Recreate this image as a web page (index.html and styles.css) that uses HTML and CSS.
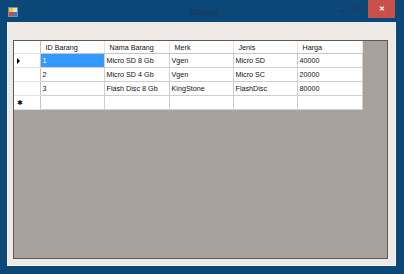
FILE: index.html
```html
<!DOCTYPE html>
<html>
<head>
<meta charset="utf-8">
<link rel="stylesheet" href="styles.css">
</head>
<body>
<div class="window">
  <div class="titlebar">
    <svg class="appicon" width="10" height="10" viewBox="0 0 10 10">
      <rect x="0" y="0" width="10" height="10" fill="#6d8fb8"/>
      <rect x="1" y="1" width="4" height="4" fill="#f2c230"/>
      <rect x="5" y="1" width="4" height="4" fill="#e9e4b0"/>
      <rect x="1" y="5" width="4" height="4" fill="#d2473a"/>
      <rect x="5" y="5" width="4" height="4" fill="#3d78c9"/>
    </svg>
    <div class="title">Barang</div>
    <div class="controls">
      <div class="ctl min"><span class="dash"></span></div>
      <div class="ctl max"><span class="box"></span></div>
      <div class="ctl close">&#x2715;</div>
    </div>
  </div>
  <div class="client">
    <div class="grid">
      <table class="dg">
        <colgroup>
          <col class="c-rh"><col class="c1"><col class="c2"><col class="c3"><col class="c4"><col class="c5">
        </colgroup>
        <thead>
          <tr><th class="rh"></th><th>ID Barang</th><th>Nama Barang</th><th>Merk</th><th>Jenis</th><th>Harga</th></tr>
        </thead>
        <tbody>
          <tr><td class="rh"><span class="arrow"></span></td><td class="sel">1</td><td>Micro SD 8 Gb</td><td>Vgen</td><td>Micro SD</td><td>40000</td></tr>
          <tr><td class="rh"></td><td>2</td><td>Micro SD 4 Gb</td><td>Vgen</td><td>Micro SC</td><td>20000</td></tr>
          <tr><td class="rh"></td><td>3</td><td>Flash Disc 8 Gb</td><td>KingStone</td><td>FlashDisc</td><td>80000</td></tr>
          <tr><td class="rh star">&#x2731;</td><td></td><td></td><td></td><td></td><td></td></tr>
        </tbody>
      </table>
    </div>
  </div>
</div>
</body>
</html>
```
FILE: styles.css
```css
html, body {
  margin: 0;
  padding: 0;
}
body {
  width: 404px;
  height: 274px;
  overflow: hidden;
  background: #0b4777;
  font-family: "Liberation Sans", Arial, sans-serif;
}
.window {
  display: flex;
  flex-direction: column;
  width: 404px;
  height: 274px;
}
.titlebar {
  position: relative;
  height: 22px;
  display: flex;
  align-items: center;
}
.appicon {
  position: absolute;
  left: 8px;
  top: 7px;
}
.title {
  flex: 1;
  text-align: center;
  font-size: 9px;
  color: #1d3656;
  padding-top: 2px;
  padding-left: 4px;
}
.controls {
  position: absolute;
  right: 9px;
  top: 0;
  display: flex;
  height: 18px;
}
.ctl {
  height: 18px;
  display: flex;
  align-items: center;
  justify-content: center;
}
.min { width: 18px; }
.max { width: 14px; margin-right: 4px; }
.dash {
  width: 5px;
  height: 2px;
  background: #1f3a5c;
  margin-top: 4px;
}
.box {
  width: 4px;
  height: 4px;
  border: 1px solid #1f3a5c;
  margin-top: -2px;
}
.close {
  width: 27px;
  background: #c9504b;
  color: #ffffff;
  font-size: 7px;
  font-weight: bold;
}
.client {
  margin: 0 8px 8px 7px;
  flex: 1;
  background: #ece9e6;
  border-left: 1px solid #f6f5f3;
  border-right: 1px solid #f6f5f3;
  border-bottom: 1px solid #f6f5f3;
  padding: 18px 7px 6px 5px;
  display: flex;
}
.grid {
  flex: 1;
  background: #a8a09b;
  border: 1px solid #5c5a58;
}
.dg {
  border-collapse: collapse;
  table-layout: fixed;
  width: 348px;
  font-size: 7.2px;
  color: #111;
}
.c-rh { width: 26px; }
.c1 { width: 64px; }
.c2 { width: 65px; }
.c3 { width: 64px; }
.c4 { width: 64px; }
.c5 { width: 65px; }
.dg th, .dg td {
  padding: 0;
  white-space: nowrap;
  overflow: hidden;
  text-align: left;
  background: #ffffff;
}
.dg th {
  height: 12px;
  font-weight: normal;
  padding-left: 5px;
  border-right: 1px solid #e4e4e4;
  border-bottom: 1px solid #c4c4c4;
}
.dg td {
  height: 13px;
  padding-left: 2px;
  border-right: 1px solid #cfcfcf;
  border-bottom: 1px solid #cfcfcf;
}
.dg .rh {
  padding: 0;
  border-right: 1px solid #c4c4c4;
  border-bottom: 1px solid #e4e4e4;
  position: relative;
}
.dg td.sel {
  background: #3399ff;
  color: #ffffff;
}
.arrow {
  position: absolute;
  left: 3px;
  top: 4px;
  width: 0;
  height: 0;
  border-top: 3px solid transparent;
  border-bottom: 3px solid transparent;
  border-left: 3px solid #000;
}
.star {
  font-size: 7px;
  text-align: left;
  padding-left: 3px !important;
  color: #111;
}
```
